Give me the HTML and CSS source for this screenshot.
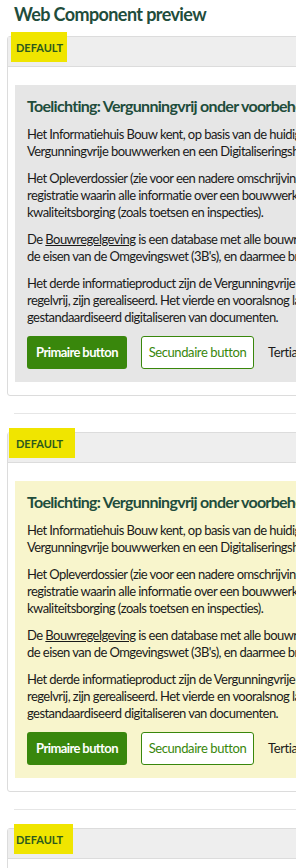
FILE: index.html
```html
<!DOCTYPE html>
<html lang="nl">
<head>
  <meta charset="UTF-8">
  <meta name="viewport" content="width=device-width, initial-scale=1.0">
  <title>Web Component preview</title>
  <link rel="stylesheet" href="styles.css">
</head>
<body>
  <h1 class="page-title">Web Component preview</h1>

  <section class="preview">
    <div class="preview-head"><span class="tag">DEFAULT</span></div>
    <div class="preview-body">
      <div class="explain">
        <h2>Toelichting: Vergunningvrij onder voorbehoud</h2>
        <p>Het Informatiehuis Bouw kent, op basis van de huidige inzichten, vier informatieproducten: het Opleverdossier, de Bouwregelgeving,<br>Vergunningvrije bouwwerken en een Digitaliseringshulp voor gemeenten en initiatiefnemers.</p>
        <p>Het Opleverdossier (zie voor een nadere omschrijving van het dossier de toelichting) is een digitale<br>registratie waarin alle informatie over een bouwwerk is opgenomen die nodig is voor het aantonen van de<br>kwaliteitsborging (zoals toetsen en inspecties).</p>
        <p>De <a href="#">Bouwregelgeving</a> is een database met alle bouwregels uit het Besluit bouwwerken leefomgeving die voortvloeien uit<br>de eisen van de Omgevingswet (3B's), en daarmee bruikbaar voor toetsing.</p>
        <p>Het derde informatieproduct zijn de Vergunningvrije bouwwerken: bouwwerken die, mits<br>regelvrij, zijn gerealiseerd. Het vierde en vooralsnog laatste informatieproduct is het<br>gestandaardiseerd digitaliseren van documenten.</p>
        <div class="actions">
          <a href="#" class="btn btn-primary">Primaire button</a>
          <a href="#" class="btn btn-secondary">Secundaire button</a>
          <a href="#" class="btn btn-tertiary">Tertiaire button</a>
        </div>
      </div>
    </div>
  </section>

  <hr class="divider">

  <section class="preview">
    <div class="preview-head"><span class="tag tag-wide">DEFAULT</span></div>
    <div class="preview-body">
      <div class="explain explain-yellow">
        <h2>Toelichting: Vergunningvrij onder voorbehoud</h2>
        <p>Het Informatiehuis Bouw kent, op basis van de huidige inzichten, vier informatieproducten: het Opleverdossier, de Bouwregelgeving,<br>Vergunningvrije bouwwerken en een Digitaliseringshulp voor gemeenten en initiatiefnemers.</p>
        <p>Het Opleverdossier (zie voor een nadere omschrijving van het dossier de toelichting) is een digitale<br>registratie waarin alle informatie over een bouwwerk is opgenomen die nodig is voor het aantonen van de<br>kwaliteitsborging (zoals toetsen en inspecties).</p>
        <p>De <a href="#">Bouwregelgeving</a> is een database met alle bouwregels uit het Besluit bouwwerken leefomgeving die voortvloeien uit<br>de eisen van de Omgevingswet (3B's), en daarmee bruikbaar voor toetsing.</p>
        <p>Het derde informatieproduct zijn de Vergunningvrije bouwwerken: bouwwerken die, mits<br>regelvrij, zijn gerealiseerd. Het vierde en vooralsnog laatste informatieproduct is het<br>gestandaardiseerd digitaliseren van documenten.</p>
        <div class="actions">
          <a href="#" class="btn btn-primary">Primaire button</a>
          <a href="#" class="btn btn-secondary">Secundaire button</a>
          <a href="#" class="btn btn-tertiary">Tertiaire button</a>
        </div>
      </div>
    </div>
  </section>

  <hr class="divider">

  <section class="preview">
    <div class="preview-head"><span class="tag tag-inset">DEFAULT</span></div>
    <div class="preview-body">
      <div class="explain">
        <h2>Toelichting: Vergunningvrij onder voorbehoud</h2>
        <p>Het Informatiehuis Bouw kent, op basis van de huidige inzichten, vier informatieproducten.</p>
      </div>
    </div>
  </section>
</body>
</html>
```

FILE: styles.css
```css
html, body {
  margin: 0;
  padding: 0;
  overflow: hidden;
}

body {
  width: 1000px;
  padding: 0 7px;
  font-family: Lato, 'Open Sans', sans-serif;
  color: #1a1a1a;
  background: #fff;
}

.page-title {
  margin: 0;
  padding: 3px 7px 0;
  height: 33px;
  font-size: 18px;
  line-height: 22px;
  letter-spacing: -0.6px;
  color: #1f4d3c;
}

.preview {
  border: 1px solid #dcdcdc;
  border-radius: 3px;
}

.preview-head {
  display: flex;
  align-items: flex-start;
  height: 29px;
  padding: 0 3px;
  background: #eeeeee;
  border-bottom: 1px solid #dcdcdc;
}

.tag {
  display: block;
  margin-top: -5px;
  height: 30px;
  padding: 0 4px 0 5px;
  background: #f0e500;
  color: #2c5a1e;
  font-size: 11px;
  font-weight: 700;
  line-height: 31px;
}

.tag-wide {
  margin-left: -2px;
  padding: 0 12px 0 7px;
}

.tag-inset {
  margin-left: 3px;
  padding: 0 10px 0 2px;
}

.preview-body {
  padding: 18px 7px 13px;
}

.explain {
  padding: 10px 12px 13px;
  background: #e6e6e6;
}

.explain-yellow {
  background: #f8f5cc;
}

.explain h2 {
  margin: 0 0 9px;
  font-size: 16px;
  line-height: 22px;
  letter-spacing: -0.7px;
  color: #1f4d3c;
}

.explain p {
  margin: 0 0 10px;
  font-size: 13px;
  line-height: 17px;
  letter-spacing: -0.55px;
}

.explain p a {
  color: inherit;
}

.actions {
  display: flex;
  align-items: center;
  gap: 14px;
  margin-top: 9px;
}

.btn {
  display: block;
  box-sizing: border-box;
  height: 33px;
  border-radius: 3px;
  font-size: 13px;
  line-height: 33px;
  letter-spacing: -0.4px;
  text-align: center;
  text-decoration: none;
  white-space: nowrap;
}

.btn-primary {
  width: 100px;
  background: #39870c;
  font-weight: 700;
  letter-spacing: -0.6px;
  color: #fff;
}

.btn-secondary {
  width: 113px;
  background: #fff;
  border: 1px solid #39870c;
  line-height: 31px;
  color: #39870c;
}

.btn-tertiary {
  color: #1a1a1a;
}

.divider {
  margin: 17px 0 18px 7px;
  border: 0;
  border-top: 1px solid #e6e6e6;
}
```
